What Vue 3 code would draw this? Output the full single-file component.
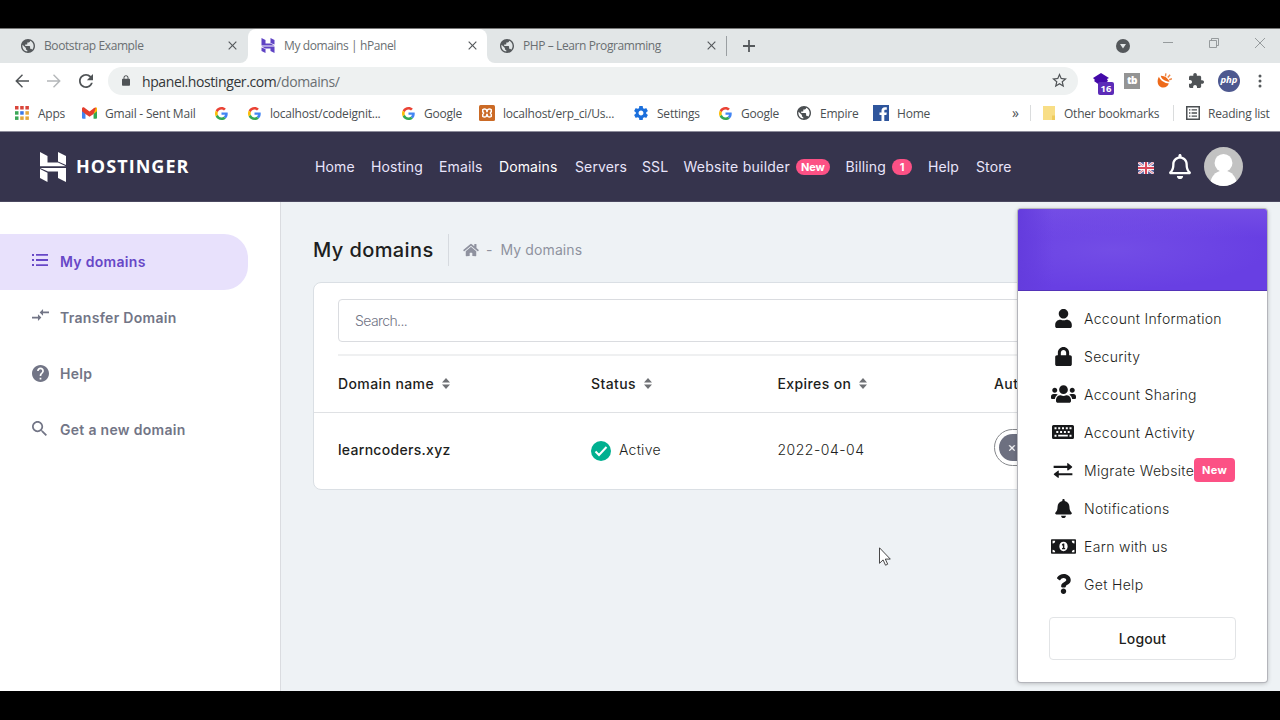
<script setup>
import { h } from 'vue'

// Single path icons: [viewBox, path]
const paths = {
  globe: ['2 2 20 20', 'M12 2C6.48 2 2 6.48 2 12s4.48 10 10 10 10-4.48 10-10S17.52 2 12 2zm-1 17.93c-3.95-.49-7-3.85-7-7.93 0-.62.08-1.21.21-1.79L9 15v1c0 1.1.9 2 2 2v1.93zm6.9-2.54c-.26-.81-1-1.39-1.9-1.39h-1v-3c0-.55-.45-1-1-1H8v-2h2c.55 0 1-.45 1-1V7h2c1.1 0 2-.9 2-2v-.41c2.93 1.19 5 4.06 5 7.41 0 2.08-.8 3.97-2.1 5.39z'],
  close: ['0 0 10 10', 'M1.2.3L5 4.1 8.8.3l.9.9L5.9 5l3.8 3.8-.9.9L5 5.9 1.2 9.7l-.9-.9L4.1 5 .3 1.2z'],
  plus: ['0 0 12 12', 'M5.1 0h1.8v5.1H12v1.8H6.9V12H5.1V6.9H0V5.1h5.1z'],
  back: ['4 4 16 16', 'M20 11.1H7.5l5.6-5.6L12 4.3 4.3 12l7.7 7.7 1.1-1.2-5.6-5.6H20z'],
  forward: ['4 4 16 16', 'M4 11.1h12.5l-5.6-5.6L12 4.3l7.7 7.7-7.7 7.7-1.1-1.2 5.6-5.6H4z'],
  reload: ['4 4 16 16', 'M17.65 6.35C16.2 4.9 14.21 4 12 4c-4.42 0-7.99 3.58-7.99 8s3.57 8 7.99 8c3.73 0 6.84-2.55 7.73-6h-2.08c-.82 2.33-3.04 4-5.65 4-3.31 0-6-2.69-6-6s2.69-6 6-6c1.66 0 3.14.69 4.22 1.78L13 11h7V4l-2.35 2.35z'],
  padlock: ['4 1 16 21', 'M18 8h-1V6c0-2.76-2.24-5-5-5S7 3.24 7 6v2H6c-1.1 0-2 .9-2 2v10c0 1.1.9 2 2 2h12c1.1 0 2-.9 2-2V10c0-1.1-.9-2-2-2zM8.9 8V6c0-1.71 1.39-3.1 3.1-3.1s3.1 1.39 3.1 3.1v2z'],
  star: ['2 2 20 20', 'M22 9.24l-7.19-.62L12 2 9.19 8.63 2 9.24l5.46 4.73L5.82 21 12 17.27 18.18 21l-1.63-7.03L22 9.24zM12 15.4l-3.76 2.27 1-4.28-3.32-2.88 4.38-.38L12 6.1l1.71 4.04 4.38.38-3.32 2.88 1 4.28L12 15.4z'],
  puzzle: ['2 1 21 21', 'M20.5 11H19V7c0-1.1-.9-2-2-2h-4V3.5C13 2.12 11.88 1 10.5 1S8 2.12 8 3.5V5H4c-1.1 0-1.99.9-1.99 2v3.8H3.5c1.49 0 2.7 1.21 2.7 2.7s-1.21 2.7-2.7 2.7H2V20c0 1.1.9 2 2 2h3.8v-1.5c0-1.49 1.21-2.7 2.7-2.7 1.49 0 2.7 1.21 2.7 2.7V22H17c1.1 0 2-.9 2-2v-4h1.5c1.38 0 2.5-1.12 2.5-2.5S21.88 11 20.5 11z'],
  gear: ['2 2 20 20', 'M19.43 12.98c.04-.32.07-.64.07-.98s-.03-.66-.07-.98l2.11-1.65c.19-.15.24-.42.12-.64l-2-3.46c-.12-.22-.39-.3-.61-.22l-2.49 1c-.52-.4-1.08-.73-1.69-.98l-.38-2.65C14.46 2.18 14.25 2 14 2h-4c-.25 0-.46.18-.49.42l-.38 2.65c-.61.25-1.17.59-1.69.98l-2.49-1c-.23-.09-.49 0-.61.22l-2 3.46c-.13.22-.07.49.12.64l2.11 1.65c-.04.32-.07.65-.07.98s.03.66.07.98l-2.11 1.65c-.19.15-.24.42-.12.64l2 3.46c.12.22.39.3.61.22l2.49-1c.52.4 1.08.73 1.69.98l.38 2.65c.03.24.24.42.49.42h4c.25 0 .46-.18.49-.42l.38-2.65c.61-.25 1.17-.59 1.69-.98l2.49 1c.23.09.49 0 .61-.22l2-3.46c.12-.22.07-.49-.12-.64l-2.11-1.65zM12 15.5c-1.93 0-3.5-1.57-3.5-3.5s1.57-3.5 3.5-3.5 3.5 1.57 3.5 3.5-1.57 3.5-3.5 3.5z'],
  list: ['0 0 16 12', 'M0 0h2v2H0zM4 0h12v1.8H4zM0 5h2v2H0zM4 5.1h12v1.8H4zM0 10h2v2H0zM4 10.2h12V12H4z'],
  transfer: ['2 5 20 14', 'M9.01 14H2v2h7.01v3L13 15l-3.99-4v3zm5.98-1v-3H22V8h-7.01V5L11 9l3.99 4z'],
  help: ['2 2 20 20', 'M12 2C6.48 2 2 6.48 2 12s4.48 10 10 10 10-4.48 10-10S17.52 2 12 2zm1 17h-2v-2h2v2zm2.07-7.75l-.9.92C13.45 12.9 13 13.5 13 15h-2v-.5c0-1.1.45-2.1 1.17-2.83l1.24-1.26c.37-.36.59-.86.59-1.41 0-1.1-.9-2-2-2s-2 .9-2 2H8c0-2.21 1.79-4 4-4s4 1.79 4 4c0 .88-.36 1.68-.93 2.25z'],
  find: ['3 3 17.5 17.5', 'M15.5 14h-.79l-.28-.27C15.41 12.59 16 11.11 16 9.5 16 5.91 13.09 3 9.5 3S3 5.91 3 9.5 5.91 16 9.5 16c1.61 0 3.09-.59 4.23-1.57l.27.28v.79l5 4.99L20.49 19l-4.99-5zm-6 0C7.01 14 5 11.99 5 9.5S7.01 5 9.5 5 14 7.01 14 9.5 11.99 14 9.5 14z'],
  home: ['0 0 576 512', 'M280.37 148.26L96 300.11V464a16 16 0 0 0 16 16l112.06-.29a16 16 0 0 0 15.92-16V368a16 16 0 0 1 16-16h64a16 16 0 0 1 16 16v95.64a16 16 0 0 0 16 16.05L464 480a16 16 0 0 0 16-16V300L295.67 148.26a12.19 12.19 0 0 0-15.3 0zM571.6 251.47L488 182.56V44.05a12 12 0 0 0-12-12h-56a12 12 0 0 0-12 12v72.61L318.47 43a48 48 0 0 0-61 0L4.34 251.47a12 12 0 0 0-1.6 16.9l25.5 31A12 12 0 0 0 45.15 301l235.22-193.74a12.19 12.19 0 0 1 15.3 0L530.9 301a12 12 0 0 0 16.9-1.6l25.5-31a12 12 0 0 0-1.7-16.93z'],
  sort: ['0 0 8 11', 'M4 0l4 4.6H0zM4 11L0 6.4h8z'],
  user: ['0 0 448 512', 'M224 256c70.7 0 128-57.3 128-128S294.7 0 224 0 96 57.3 96 128s57.3 128 128 128zm89.6 32h-16.7c-22.2 10.2-46.9 16-72.9 16s-50.6-5.8-72.9-16h-16.7C60.2 288 0 348.2 0 422.4V464c0 26.5 21.5 48 48 48h352c26.5 0 48-21.5 48-48v-41.6c0-74.2-60.2-134.4-134.4-134.4z'],
  lock: ['0 0 448 512', 'M400 224h-24v-72C376 68.2 307.8 0 224 0S72 68.2 72 152v72H48c-26.5 0-48 21.5-48 48v192c0 26.5 21.5 48 48 48h352c26.5 0 48-21.5 48-48V272c0-26.5-21.5-48-48-48zm-104 0H152v-72c0-39.7 32.3-72 72-72s72 32.3 72 72v72z'],
  users: ['0 0 640 512', 'M96 224c35.3 0 64-28.7 64-64s-28.7-64-64-64-64 28.7-64 64 28.7 64 64 64zm448 0c35.3 0 64-28.7 64-64s-28.7-64-64-64-64 28.7-64 64 28.7 64 64 64zm32 32h-64c-17.6 0-33.5 7.1-45.1 18.6 40.3 22.1 68.9 62 75.1 109.4h66c17.7 0 32-14.3 32-32v-32c0-35.3-28.7-64-64-64zm-256 0c61.9 0 112-50.1 112-112S381.9 32 320 32 208 82.1 208 144s50.1 112 112 112zm76.8 32h-8.3c-20.8 10-43.9 16-68.5 16s-47.6-6-68.5-16h-8.3C179.6 288 128 339.6 128 403.2V432c0 26.5 21.5 48 48 48h288c26.5 0 48-21.5 48-48v-28.8c0-63.6-51.6-115.2-115.2-115.2zm-223.7-13.4C161.5 263.1 145.6 256 128 256H64c-35.3 0-64 28.7-64 64v32c0 17.7 14.3 32 32 32h65.9c6.3-47.4 34.9-87.3 75.2-109.4z'],
  keyboard: ['0 0 22 14', 'M1.5 0h19A1.5 1.5 0 0 1 22 1.5v11a1.5 1.5 0 0 1-1.5 1.5h-19A1.5 1.5 0 0 1 0 12.5v-11A1.5 1.5 0 0 1 1.5 0zM2.5 2.2v2h2v-2zM6.2 2.2v2h2v-2zM10 2.2v2h2v-2zM13.8 2.2v2h2v-2zM17.5 2.2v2h2v-2zM4.3 6v2h2V6zM8.1 6v2h2V6zM11.9 6v2h2V6zM15.7 6v2h2V6zM2.5 9.8v2h2v-2zM6.2 9.8v1.6h9.6V9.8zM17.5 9.8v2h2v-2z'],
  exchange: ['0 0 20 16', 'M0 3h14.5V.6c0-.5.5-.7.9-.4l4.2 3.5c.3.3.3.7 0 1l-4.2 3.2c-.4.3-.9.1-.9-.4V5.2H0zM20 13H5.5v2.4c0 .5-.5.7-.9.4L.4 12.4c-.3-.3-.3-.7 0-1l4.2-3.2c.4-.3.9-.1.9.4v2.2H20z'],
  bell: ['0 0 448 512', 'M224 512c35.32 0 63.97-28.65 63.97-64H160.03c0 35.35 28.65 64 63.97 64zm215.39-149.71c-19.32-20.76-55.47-51.99-55.47-154.29 0-77.7-54.48-139.9-127.94-155.16V32c0-17.67-14.32-32-31.98-32s-31.98 14.33-31.98 32v20.84C118.56 68.1 64.08 130.3 64.08 208c0 102.3-36.15 133.53-55.47 154.29-6 6.45-8.66 14.16-8.61 21.71.11 16.4 12.98 32 32.1 32h383.8c19.12 0 32-15.6 32.1-32 .05-7.55-2.61-15.27-8.61-21.71z'],
  bellOutline: ['0 0 448 512', 'M439.39 362.29c-19.32-20.76-55.47-51.99-55.47-154.29 0-77.7-54.48-139.9-127.94-155.16V32c0-17.67-14.32-32-31.98-32s-31.98 14.33-31.98 32v20.84C118.56 68.1 64.08 130.3 64.08 208c0 102.3-36.15 133.53-55.47 154.29-6 6.45-8.66 14.16-8.61 21.71.11 16.4 12.98 32 32.1 32h383.8c19.12 0 32-15.6 32.1-32 .05-7.55-2.61-15.27-8.61-21.71zM67.53 368c21.22-27.97 44.42-74.33 44.53-159.42 0-.2-.06-.38-.06-.58 0-61.86 50.14-112 112-112s112 50.14 112 112c0 .2-.06.38-.06.58.11 85.1 23.31 131.46 44.53 159.42H67.53zM224 512c35.32 0 63.97-28.65 63.97-64H160.03c0 35.35 28.65 64 63.97 64z'],
  money: ['0 0 24 14', 'M.8 0h22.4q.8 0 .8.8v12.4q0 .8-.8.8H.8q-.8 0-.8-.8V.8Q0 0 .8 0zM1.5 1.5v2.5A2.5 2.5 0 0 0 4 1.5zM20 1.5A2.5 2.5 0 0 0 22.5 4V1.5zM1.5 10v2.5H4A2.5 2.5 0 0 0 1.5 10zM22.5 10a2.5 2.5 0 0 0-2.5 2.5h2.5zM12 2.5c-2.3 0-4 2-4 4.5s1.7 4.5 4 4.5 4-2 4-4.5-1.7-4.5-4-4.5zM11.4 4.2h1.4V8.5h.8v1.2h-3V8.5h.8V6h-.9V5z'],
  question: ['0 0 384 512', 'M202.021 0C122.202 0 70.503 32.703 29.914 91.026c-7.363 10.58-5.093 25.086 5.178 32.874l43.138 32.709c10.373 7.865 25.132 6.026 33.253-4.148 25.049-31.381 43.63-49.449 82.757-49.449 30.764 0 68.816 19.799 68.816 49.631 0 22.552-18.617 34.134-48.993 51.164-35.423 19.86-82.299 44.576-82.299 106.405V320c0 13.255 10.745 24 24 24h72.471c13.255 0 24-10.745 24-24v-5.773c0-42.86 125.268-44.645 125.268-160.627C377.504 66.256 286.902 0 202.021 0zM192 373.459c-38.196 0-69.271 31.075-69.271 69.271 0 38.195 31.075 69.27 69.271 69.27s69.271-31.075 69.271-69.271-31.075-69.27-69.271-69.27z'],
  readingList: ['0 0 14 14', 'M0 0h14v14H0zM1.5 1.5v11h11v-11zM3 3.2h1.4v1.4H3zM5.6 3.2H11v1.4H5.6zM3 6.3h1.4v1.4H3zM5.6 6.3H11v1.4H5.6zM3 9.4h1.4v1.4H3zM5.6 9.4H11v1.4H5.6z']
}

const Icon = ({ name }) => h(
  'svg',
  { viewBox: paths[name][0], fill: 'currentColor' },
  [h('path', { d: paths[name][1], 'fill-rule': 'evenodd' })]
)

const bookmarks = [
  { icon: 'apps', label: 'Apps' },
  { icon: 'gmail', label: 'Gmail - Sent Mail' },
  { icon: 'google', label: '' },
  { icon: 'google', label: 'localhost/codeignit...' },
  { icon: 'google', label: 'Google' },
  { icon: 'xampp', label: 'localhost/erp_ci/Us...' },
  { icon: 'gear', label: 'Settings' },
  { icon: 'google', label: 'Google' },
  { icon: 'globe', label: 'Empire' },
  { icon: 'facebook', label: 'Home' }
]

const appColors = ['#d9453a', '#d9453a', '#d9453a', '#3aa757', '#3b78e7', '#e3a73c', '#3aa757', '#e3a73c', '#e3a73c']

const navItems = [
  { label: 'Home' },
  { label: 'Hosting' },
  { label: 'Emails' },
  { label: 'Domains', active: true },
  { label: 'Servers' },
  { label: 'SSL' },
  { label: 'Website builder', badge: 'New' },
  { label: 'Billing', badge: '1' },
  { label: 'Help' },
  { label: 'Store' }
]

const sideItems = [
  { icon: 'list', label: 'My domains', active: true },
  { icon: 'transfer', label: 'Transfer Domain' },
  { icon: 'help', label: 'Help' },
  { icon: 'find', label: 'Get a new domain' }
]

const menuItems = [
  { icon: 'user', label: 'Account Information' },
  { icon: 'lock', label: 'Security' },
  { icon: 'users', label: 'Account Sharing' },
  { icon: 'keyboard', label: 'Account Activity' },
  { icon: 'exchange', label: 'Migrate Website', badge: 'New' },
  { icon: 'bell', label: 'Notifications' },
  { icon: 'money', label: 'Earn with us' },
  { icon: 'question', label: 'Get Help' }
]
</script>

<template>
  <div class="screen">
    <div class="browser">
      <!-- Tab strip -->
      <div class="tabs">
        <div class="tab first">
          <Icon name="globe" class="favicon" />
          <span class="tab-title">Bootstrap Example</span>
          <Icon name="close" class="tab-close" />
        </div>
        <div class="tab active">
          <svg class="favicon" viewBox="0 0 26 30" fill="#5f43c4">
            <path d="M0 0l8 4v7h10l8 4H0zM18 0l8 4v9l-8-3zM0 17h26v13l-8-4v-5H8l-8-4zM0 19l8 3v8l-8-4z" />
          </svg>
          <span class="tab-title">My domains | hPanel</span>
          <Icon name="close" class="tab-close" />
        </div>
        <div class="tab">
          <Icon name="globe" class="favicon" />
          <span class="tab-title">PHP – Learn Programming</span>
          <Icon name="close" class="tab-close" />
        </div>
        <span class="tab-sep"></span>
        <Icon name="plus" class="new-tab" />
        <div class="window-buttons">
          <svg class="tab-search" viewBox="0 0 14 14">
            <circle cx="7" cy="7" r="7" fill="#54585b" />
            <path d="M4 5h6l-3 4.5z" fill="#e2e6e7" />
          </svg>
          <svg class="win" viewBox="0 0 12 12"><path d="M1 5.5h10" /></svg>
          <svg class="win" viewBox="0 0 12 12"><path d="M1.5 3.5h7v7h-7zM3.5 3.5V1.5h7v7h-2" /></svg>
          <svg class="win" viewBox="0 0 12 12"><path d="M1 1l10 10M11 1L1 11" /></svg>
        </div>
      </div>

      <!-- Address bar -->
      <div class="toolbar">
        <Icon name="back" class="tool" />
        <Icon name="forward" class="tool dim" />
        <Icon name="reload" class="tool" />
        <div class="omnibox">
          <Icon name="padlock" class="omni-lock" />
          <span class="url">hpanel.hostinger.com<em>/domains/</em></span>
          <Icon name="star" class="omni-star" />
        </div>
        <div class="extensions">
          <span class="ext-box">
            <svg viewBox="0 0 18 18"><path d="M9 1l8 5-2 1 1 2-7 5-7-5 1-1-2-2z" fill="#4309a8" /></svg>
            <b class="ext-count">16</b>
          </span>
          <span class="ext-tb">tb</span>
          <svg class="ext-orange" viewBox="0 0 16 16">
            <path d="M2 4C-.5 8 .5 13.5 4.5 15.2c4 1.3 7.5-1 8-4.2C8.500 11 4 8.500 2 4z" fill="#ee6a1a" />
            <path d="M4 3c.5 3.5 5 6.5 9.3 6.2C12 6 8 2.800 4 3z" fill="#ee6a1a" />
            <path d="M9 3.5L9.5.5M11.5 4.8L14 1.8M13 7.2l3-1.2" stroke="#ee8a4c" stroke-width="1.5" fill="none" />
          </svg>
          <Icon name="puzzle" class="ext-puzzle" />
          <span class="ext-php">php</span>
          <svg class="ext-menu" viewBox="0 0 4 14" fill="#55595c">
            <circle cx="2" cy="2" r="1.5" /><circle cx="2" cy="7" r="1.5" /><circle cx="2" cy="12" r="1.5" />
          </svg>
        </div>
      </div>

      <!-- Bookmarks -->
      <div class="bookmarks">
        <div v-for="(item, i) in bookmarks" :key="i" class="bookmark">
          <span class="bm-icon">
            <svg v-if="item.icon === 'apps'" class="i14" viewBox="0 0 14 14">
              <rect
                v-for="(color, n) in appColors"
                :key="n"
                :x="(n % 3) * 5.2"
                :y="Math.floor(n / 3) * 5.2"
                width="3.5"
                height="3.5"
                :fill="color"
              />
            </svg>
            <svg v-else-if="item.icon === 'gmail'" class="i15" viewBox="0 0 16 12">
              <path d="M0 1.5V11q0 1 1 1h2.700V5z" fill="#4285f4" />
              <path d="M16 1.5V11q0 1-1 1h-2.700V5z" fill="#34a853" />
              <path d="M12.3 1L16 0v4l-3.7 3z" fill="#fbbc04" />
              <path d="M0 4V1.5C0 0 1.5-.5 2.7.4L8 4.5 13.3.4 15 0l-2.700 7L8 10 3.7 7z" fill="#e43e2f" />
            </svg>
            <svg v-else-if="item.icon === 'google'" class="i13" viewBox="0 0 48 48">
              <path fill="#EA4335" d="M24 9.5c3.54 0 6.71 1.22 9.21 3.6l6.85-6.85C35.9 2.38 30.47 0 24 0 14.62 0 6.51 5.38 2.56 13.22l7.98 6.19C12.43 13.72 17.74 9.5 24 9.5z" />
              <path fill="#4285F4" d="M46.98 24.55c0-1.57-.15-3.09-.38-4.55H24v9.02h12.94c-.58 2.96-2.26 5.48-4.78 7.18l7.73 6c4.51-4.18 7.09-10.36 7.09-17.65z" />
              <path fill="#FBBC05" d="M10.53 28.59c-.48-1.45-.76-2.99-.76-4.59s.27-3.14.76-4.59l-7.98-6.19C.92 16.46 0 20.12 0 24c0 3.88.92 7.54 2.56 10.78l7.97-6.19z" />
              <path fill="#34A853" d="M24 48c6.48 0 11.93-2.13 15.89-5.81l-7.73-6c-2.15 1.45-4.92 2.3-8.16 2.3-6.26 0-11.57-4.22-13.47-9.91l-7.98 6.19C6.51 42.62 14.62 48 24 48z" />
            </svg>
            <svg v-else-if="item.icon === 'xampp'" class="i16" viewBox="0 0 16 16">
              <rect width="16" height="16" rx="1.5" fill="#cb6a25" />
              <path d="M3.8 4.5q1.8-1.2 3.4 0Q8 6 8 7.2 8 6 8.8 4.5q1.6-1.2 3.4 0 .6 2-.8 3.5 1.4 1.5.8 3.5-1.8 1.2-3.4 0Q8 10 8 8.8 8 10 7.2 11.5q-1.6 1.2-3.4 0-.6-2 .8-3.5-1.4-1.5-.8-3.5z" fill="none" stroke="#fff" stroke-width="1.5" />
            </svg>
            <svg v-else-if="item.icon === 'facebook'" class="i16" viewBox="0 0 16 16">
              <rect width="16" height="16" fill="#2e559c" />
              <path d="M8.5 16v-6h-2V7.5h2V5.8C8.5 3.5 9.8 2.3 12 2.3h1.8v2.5h-1.3c-.9 0-1.2.4-1.2 1.2v1.5h2.5l-.4 2.5h-2.1v6z" fill="#fff" />
            </svg>
            <Icon v-else :name="item.icon" class="i14" :class="item.icon" />
          </span>
          <span>{{ item.label }}</span>
        </div>
        <span class="more">»</span>
        <div class="bookmark other">
          <svg class="folder" viewBox="0 0 12 14">
            <path d="M0 0h12v14H0z" fill="#f8de86" />
            <path d="M9 9.5h3V14H9z" fill="#eecb5c" />
          </svg>
          <span>Other bookmarks</span>
        </div>
        <div class="bookmark reading">
          <Icon name="readingList" class="i14" />
          <span>Reading list</span>
        </div>
      </div>
    </div>

    <!-- hPanel header -->
    <header class="header">
      <div class="brand">
        <svg class="logo" viewBox="0 0 26 30" fill="#fff">
          <path d="M0 0l7.5 4v6.500H18l8 3.7H0zM18 0l8 4v9l-8-3.5zM0 16h26v14l-8-4v-6.500H8zM0 17l7.5 3.7V30L0 26z" />
        </svg>
        <span class="wordmark">HOSTINGER</span>
      </div>
      <nav class="nav">
        <a v-for="item in navItems" :key="item.label" :class="{ active: item.active }">
          <span>{{ item.label }}</span>
          <span v-if="item.badge" class="pill">{{ item.badge }}</span>
        </a>
      </nav>
      <div class="account">
        <svg class="flag" viewBox="0 0 16 12">
          <path d="M0 0h16v12H0z" fill="#56609d" />
          <path d="M0 0l16 12M16 0L0 12" stroke="#f1eef5" stroke-width="2.6" />
          <path d="M0 0l16 12M16 0L0 12" stroke="#dc5a6c" stroke-width=".8" />
          <path d="M8 0v12M0 6h16" stroke="#f8f4f8" stroke-width="4.2" />
          <path d="M8 0v12M0 6h16" stroke="#d9485b" stroke-width="2" />
        </svg>
        <Icon name="bellOutline" class="header-bell" />
        <svg class="avatar" viewBox="0 0 38 38">
          <circle cx="19" cy="19" r="19" fill="#c2c2c2" />
          <circle cx="19" cy="15.5" r="8.7" fill="#fff" />
          <path d="M6.5 33.3C8 27 13 23 19 23s11 4 12.5 10.3A19 19 0 0 1 6.5 33.3z" fill="#fff" />
        </svg>
      </div>
    </header>

    <div class="body">
      <aside class="sidebar">
        <a v-for="item in sideItems" :key="item.label" class="side-item" :class="{ active: item.active }">
          <Icon :name="item.icon" class="side-icon" :class="item.icon" />
          <span>{{ item.label }}</span>
        </a>
      </aside>

      <main class="main">
        <div class="title-row">
          <h1>My domains</h1>
          <div class="crumbs">
            <Icon name="home" class="crumb-home" />
            <span class="dash">-</span>
            <span>My domains</span>
          </div>
        </div>

        <section class="card">
          <div class="search">Search...</div>
          <div class="rule"></div>
          <div class="row head">
            <span>Domain name <Icon name="sort" class="sort" /></span>
            <span>Status <Icon name="sort" class="sort" /></span>
            <span>Expires on <Icon name="sort" class="sort" /></span>
            <span>Auto-renewal</span>
          </div>
          <div class="row data">
            <span class="domain">learncoders.xyz</span>
            <span class="status">
              <svg class="check" viewBox="0 0 20 20">
                <circle cx="10" cy="10" r="10" fill="#00b090" />
                <path d="M4.5 10.5l3.5 3.5 7.5-8" fill="none" stroke="#fff" stroke-width="2" />
              </svg>
              <span>Active</span>
            </span>
            <span class="date">2022-04-04</span>
            <span class="switch"><span class="knob"><Icon name="close" class="knob-x" /></span></span>
          </div>
        </section>
      </main>

      <!-- Account dropdown -->
      <div class="dropdown">
        <div class="dropdown-head"></div>
        <div class="dropdown-list">
          <a v-for="item in menuItems" :key="item.label" class="menu-item">
            <span class="menu-icon"><Icon :name="item.icon" :class="'m-' + item.icon" /></span>
            <span>{{ item.label }}</span>
            <span v-if="item.badge" class="tag">{{ item.badge }}</span>
          </a>
        </div>
        <button class="logout">Logout</button>
      </div>

      <svg class="cursor" viewBox="0 0 12 19">
        <path d="M.5.8v15.5l3.6-3.4 2.4 5.3 2.2-1-2.4-5.1h5z" fill="#fff" stroke="#333" stroke-width=".9" />
      </svg>
    </div>
  </div>
</template>

<style>
body {
  margin: 0;
  background: #000;
}
</style>

<style scoped>
.screen {
  box-sizing: border-box;
  width: 1280px;
  height: 720px;
  padding: 28px 0 29px;
  overflow: hidden;
  background: #000;
  display: flex;
  flex-direction: column;
  font-family: Inter, "Liberation Sans", sans-serif;
  color: #1d1e20;
}

.screen *,
.screen svg {
  box-sizing: border-box;
}

svg {
  display: block;
  flex: none;
}

/* Browser chrome */
.browser {
  height: 104px;
  flex: none;
  background: #fff;
  border-bottom: 1px solid #8e8d9c;
  font-family: "Open Sans", "Noto Sans", sans-serif;
  color: #4b4f52;
}

.tabs {
  display: flex;
  align-items: center;
  height: 35px;
  padding-bottom: 1px;
  border-top: 1px solid #777;
  background: linear-gradient(to right, #e2e6e7 240px, transparent 240px, transparent 496px, #e2e6e7 496px),
    linear-gradient(#e2e6e7 50%, #fff 50%);
}

.tab {
  display: flex;
  align-items: center;
  align-self: flex-start;
  width: 239px;
  height: 34px;
  padding: 0 10px 1px 13px;
  background: #e2e6e7;
  border-radius: 0 0 0 8px;
}

.tab.first {
  width: 248px;
  padding: 0 11px 1px 21px;
  border-radius: 0 0 8px 0;
}

.tab.active {
  padding: 0 10px 1px 12px;
  background: #fff;
  border-radius: 8px 8px 0 0;
}

.favicon {
  width: 14px;
  height: 14px;
  margin-right: 9px;
  color: #55595c;
}

.active .favicon {
  width: 16px;
  height: 15px;
  margin-right: 8px;
}

.tab-title {
  flex: 1;
  font-size: 12px;
  letter-spacing: -0.4px;
  white-space: nowrap;
  color: #6a6f72;
}

.tab-close {
  width: 9px;
  height: 9px;
  color: #55595c;
}

.tab-sep {
  width: 1px;
  height: 20px;
  background: #9a9fa2;
}

.new-tab {
  width: 12px;
  height: 12px;
  margin-left: 16px;
  color: #55595c;
}

.window-buttons {
  display: flex;
  align-items: center;
  margin-left: auto;
  padding-right: 14px;
  gap: 34px;
}

.tab-search {
  width: 14px;
  height: 14px;
  margin-right: -2px;
}

.win {
  width: 12px;
  height: 12px;
  margin-bottom: 5px;
  fill: none;
  stroke: #8d9294;
  stroke-width: 0.9;
}

.toolbar {
  display: flex;
  align-items: center;
  height: 34px;
  padding: 1px 13px 0 15px;
  color: #4f5356;
}

.tool {
  width: 14px;
  height: 14px;
  margin-right: 18px;
}

.tool.dim {
  color: #b4b7b9;
}

.omnibox {
  display: flex;
  align-items: center;
  width: 970px;
  height: 28px;
  margin-left: -3px;
  padding: 0 11px 0 14px;
  border-radius: 14px;
  background: #eef1f1;
}

.omni-lock {
  width: 8px;
  height: 11px;
  margin-right: 12px;
}

.url {
  flex: 1;
  padding-top: 1px;
  font-size: 14px;
  letter-spacing: -0.4px;
  color: #333638;
}

.url em {
  font-style: normal;
  color: #6a6f72;
}

.omni-star {
  width: 15px;
  height: 15px;
}

.extensions {
  flex: 1;
  display: grid;
  grid-template-columns: 31px 32px 32px 31px 40px 4px;
  align-items: center;
  padding-left: 14px;
}

.ext-box {
  position: relative;
  width: 18px;
  height: 18px;
}

.ext-count {
  position: absolute;
  left: 6px;
  top: 10px;
  width: 16px;
  height: 13px;
  border-radius: 2px;
  background: #5c2bb8;
  color: #fff;
  font-size: 9.5px;
  line-height: 13px;
  text-align: center;
}

.ext-tb {
  width: 16px;
  height: 16px;
  margin-left: 1px;
  background: #949494;
  color: #fff;
  font-size: 10px;
  font-weight: 800;
  line-height: 15px;
  text-align: center;
  letter-spacing: -0.5px;
}

.ext-orange {
  width: 15px;
  height: 15px;
  margin-left: 2px;
}

.ext-puzzle {
  width: 15px;
  height: 15px;
  margin-left: 2px;
}

.ext-php {
  width: 22px;
  height: 22px;
  border-radius: 50%;
  background: #4d588f;
  color: #fff;
  font-size: 9.5px;
  font-weight: 700;
  font-style: italic;
  line-height: 19px;
  text-align: center;
}

.ext-menu {
  width: 4px;
  height: 14px;
}

.bookmarks {
  display: grid;
  grid-template-columns: 67px 132px 33px 154px 79px 154px 84px 79px 77px 139px 18px 143px 1fr;
  align-items: center;
  height: 33px;
  padding: 0 0 1px 14px;
  font-size: 12px;
  letter-spacing: -0.22px;
  white-space: nowrap;
}

.bookmark {
  display: flex;
  align-items: center;
  gap: 8px;
}

.bm-icon {
  display: flex;
  justify-content: center;
  width: 16px;
}

.i13 {
  width: 13px;
  height: 13px;
}

.i14 {
  width: 14px;
  height: 14px;
}

.i15 {
  width: 15px;
  height: 12px;
}

.i16 {
  width: 16px;
  height: 16px;
}

.gear {
  color: #1b6fdc;
}

.more {
  font-size: 14px;
  line-height: 14px;
}

.other,
.reading {
  height: 16px;
  padding-left: 12px;
  border-left: 1px solid #dadcdd;
}

.folder {
  width: 12px;
  height: 14px;
  margin-right: 1px;
}

/* hPanel header */
.header {
  display: flex;
  align-items: center;
  flex: none;
  height: 70px;
  background: #36344d;
  border-bottom: 1px solid #4b4960;
  color: #e9e5fb;
}

.brand {
  display: flex;
  align-items: center;
  width: 315px;
  padding-left: 40px;
  gap: 10px;
}

.logo {
  width: 26px;
  height: 30px;
}

.wordmark {
  padding-bottom: 1px;
  font-family: "Open Sans", sans-serif;
  font-size: 18px;
  font-weight: 700;
  line-height: 24px;
  letter-spacing: 1.05px;
  color: #fff;
}

.nav {
  display: grid;
  grid-template-columns: 56px 68px 60px 76px 67px 41.5px 162px 82.5px 48px 60px;
  font-size: 14px;
  letter-spacing: 0.12px;
  white-space: nowrap;
}

.nav a {
  display: flex;
  align-items: center;
  gap: 6px;
}

.nav a:nth-child(7) {
  letter-spacing: 0.25px;
}

.nav .active {
  color: #fff;
}

.pill {
  min-width: 20px;
  height: 16px;
  padding: 0 5px;
  border-radius: 8px;
  background: #fc5185;
  color: #fff;
  font-size: 11px;
  font-weight: 700;
  line-height: 16px;
  letter-spacing: -0.2px;
  text-align: center;
}

.account {
  display: flex;
  align-items: center;
  margin-left: auto;
  padding-right: 37px;
}

.flag {
  width: 16px;
  height: 12px;
  margin: 2px 15px 0 0;
}

.header-bell {
  width: 22px;
  height: 25px;
  margin-right: 13px;
  color: #fff;
}

.avatar {
  width: 39px;
  height: 39px;
}

/* Page */
.body {
  position: relative;
  display: flex;
  flex: 1;
  min-height: 0;
  background: #eef2f5;
}

.sidebar {
  width: 281px;
  flex: none;
  padding-top: 32px;
  border-right: 1px solid #dadce0;
  background: #fff;
}

.side-item {
  display: flex;
  align-items: center;
  width: 248px;
  height: 56px;
  padding: 0 0 2px 32px;
  font-size: 14px;
  font-weight: 600;
  letter-spacing: 0.3px;
  color: #727586;
}

.side-item.active {
  border-radius: 0 24px 24px 0;
  background: #e8e1fc;
  color: #6747c7;
}

.side-icon {
  width: 17px;
  height: 17px;
  margin: 1px 11px 0 0;
}

.side-icon.list {
  width: 16px;
  height: 12px;
  margin: 0 12px 2px 0;
}

.side-icon.transfer {
  height: 12px;
  margin: 0 11px 4px 0;
}

.side-icon.find {
  width: 15px;
  height: 15px;
  margin: 0 13px 2px 0;
}

.main {
  flex: 1;
  padding: 32px 32px 0;
}

.title-row {
  display: flex;
  align-items: center;
  height: 32px;
}

.title-row h1 {
  width: 135px;
  margin: 0;
  font-size: 20px;
  font-weight: 550;
  letter-spacing: 0.4px;
  white-space: nowrap;
}

.crumbs {
  display: flex;
  align-items: center;
  height: 32px;
  padding: 0 0 1px 14px;
  border-left: 1px solid #d6dadf;
  font-size: 14px;
  letter-spacing: 0.1px;
  color: #8f929f;
}

.crumb-home {
  width: 16px;
  height: 14px;
  margin-top: 1px;
}

.dash {
  margin: 0 8px 0 7px;
}

.card {
  height: 208px;
  margin-top: 16px;
  border: 1px solid #dadfe4;
  border-radius: 8px;
  background: #fff;
}

.search {
  height: 43px;
  margin: 16px 24px 0;
  padding-left: 16px;
  border: 1px solid #dadce0;
  border-radius: 4px;
  font-size: 14px;
  font-weight: 350;
  line-height: 41px;
  letter-spacing: -0.6px;
  color: #727586;
}

.rule {
  height: 2px;
  margin: 12px 24px 0;
  background: #eff0f1;
}

.row {
  display: grid;
  grid-template-columns: 253px 186.5px 216.5px 1fr;
  align-items: center;
  padding-left: 24px;
  font-size: 14px;
}

.head {
  height: 57px;
  padding-bottom: 2px;
  border-bottom: 1px solid #dfe1e4;
  font-weight: 550;
  letter-spacing: 0.4px;
}

.head span {
  display: flex;
  align-items: center;
  gap: 8px;
}

.sort {
  width: 8px;
  height: 11px;
  color: #6f7175;
}

.data {
  height: 75px;
  padding-bottom: 2px;
}

.domain {
  font-weight: 550;
  letter-spacing: 0.3px;
}

.status {
  display: flex;
  align-items: center;
  gap: 8px;
  font-weight: 350;
  letter-spacing: 0.25px;
}

.date {
  font-weight: 350;
  letter-spacing: 0.5px;
}

.check {
  width: 20px;
  height: 20px;
  margin-top: 3px;
}

.switch {
  width: 74px;
  height: 37px;
  margin-top: -4px;
  padding: 4px;
  border: 1px solid #85878b;
  border-radius: 19px;
}

.knob {
  display: flex;
  align-items: center;
  width: 50px;
  height: 27px;
  padding-left: 10px;
  border-radius: 14px;
  background: #6d7080;
}

.knob-x {
  width: 6px;
  height: 6px;
  color: #fff;
  stroke: #fff;
  overflow: visible;
}

.dropdown {
  position: absolute;
  left: 1018px;
  top: 7px;
  width: 249px;
  height: 473px;
  border-radius: 3px;
  background: #fff;
  box-shadow: 0 0 0 1px #b4b5bb, 0 1px 5px rgba(0, 0, 0, 0.3);
  overflow: hidden;
}

.dropdown-head {
  height: 82px;
  background: linear-gradient(to right, #643cdd 0, rgba(100, 60, 221, 0) 14%),
    linear-gradient(rgba(128, 92, 232, 0.5) 0, rgba(128, 92, 232, 0) 35%),
    radial-gradient(ellipse at 38% 50%, #734de6 0, #683fe3 70%);
  border-bottom: 1px solid #5433b8;
}

.dropdown-list {
  padding: 8px 0 0 31px;
}

.menu-item {
  display: flex;
  align-items: center;
  height: 38px;
  font-size: 14px;
  font-weight: 300;
  letter-spacing: 0.33px;
  white-space: nowrap;
}

.menu-icon {
  display: flex;
  justify-content: center;
  width: 28px;
  margin-right: 7px;
  color: #17181a;
}

.m-user,
.m-lock {
  width: 17px;
  height: 19px;
}

.m-users {
  width: 25px;
  height: 20px;
}

.m-keyboard {
  width: 22px;
  height: 14px;
}

.m-exchange {
  width: 20px;
  height: 15px;
}

.m-bell {
  width: 17px;
  height: 19px;
}

.m-money {
  width: 25px;
  height: 15px;
}

.m-question {
  width: 15px;
  height: 20px;
}

.tag {
  width: 41px;
  height: 24px;
  border-radius: 4px;
  background: #fc5185;
  color: #fff;
  font-size: 11px;
  font-weight: 700;
  line-height: 24px;
  text-align: center;
}

.logout {
  display: block;
  width: 187px;
  height: 43px;
  margin: 14px 0 0 31px;
  border: 1px solid #e2e4e6;
  border-radius: 4px;
  background: #fff;
  font-family: inherit;
  font-size: 14px;
  font-weight: 550;
  letter-spacing: 0.1px;
  color: #1d1e20;
}

.cursor {
  position: absolute;
  left: 879px;
  top: 345px;
  width: 12px;
  height: 19px;
}
</style>
